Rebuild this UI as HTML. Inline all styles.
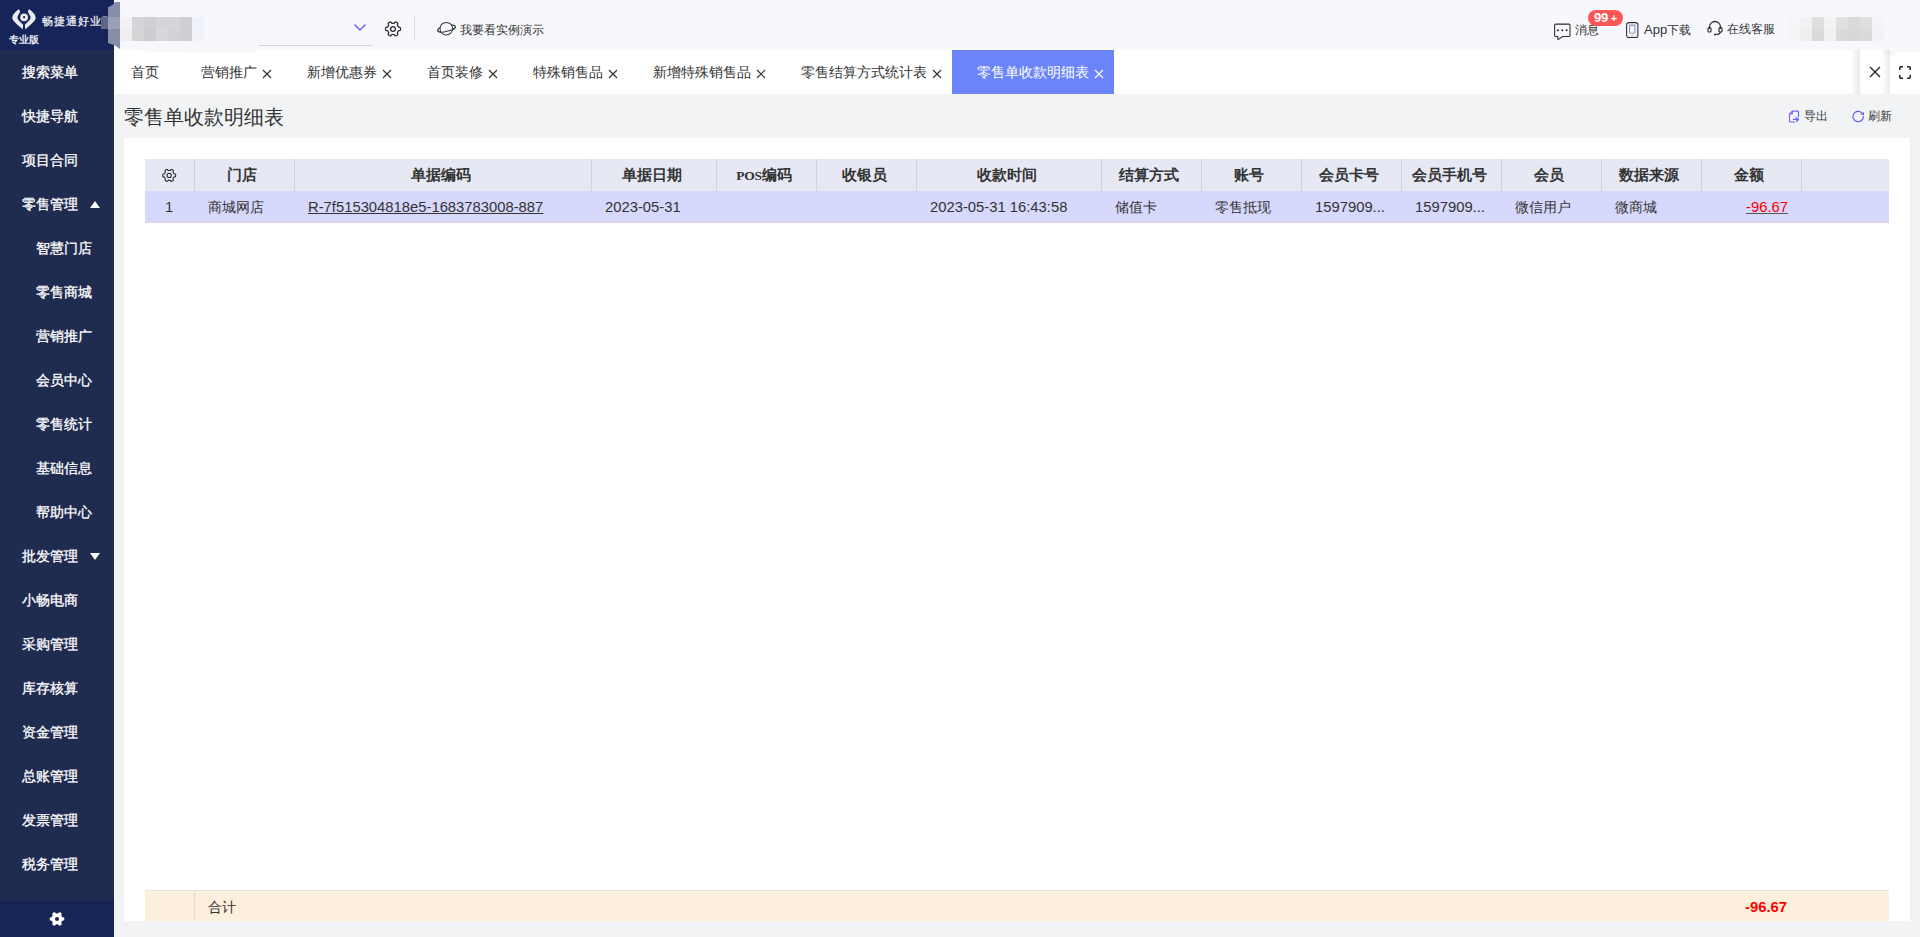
<!DOCTYPE html>
<html><head><meta charset="utf-8"><style>
*{box-sizing:border-box;margin:0;padding:0}
html,body{width:1920px;height:937px;overflow:hidden;background:#f2f3f5;font-family:"Liberation Sans",sans-serif;}
.a{position:absolute;white-space:nowrap}
#side{position:absolute;left:0;top:0;width:114px;height:937px;background:#1f2b4f;}
.mi{position:absolute;left:22px;height:44px;line-height:44px;font-size:14px;-webkit-text-stroke:0.3px #fff;color:#fff;white-space:nowrap}
.mi.sub{left:36px}
.tab{position:absolute;top:50px;height:44px;line-height:44px;font-size:14px;color:#333;white-space:nowrap;padding-left:24px}
.th{position:absolute;top:159px;height:32px;line-height:32px;font-size:14px;font-weight:bold;color:#333;text-align:center;white-space:nowrap}
.td{position:absolute;top:191px;height:32px;line-height:32px;font-size:13px;color:#333;white-space:nowrap}
.vb{position:absolute;top:159px;width:1px;height:32px;background:#d3d5dc}
</style></head><body>
<div id="side">
<div class="a" style="left:0;top:0;width:114px;height:50px;background:#16245a"></div>
<svg class="a" style="left:12px;top:9px" width="24" height="21" viewBox="0 0 24 21">
<path d="M6.6 0.2 C3.5 2.6 0.4 5.6 0.3 8.8 C0.3 11.8 5.5 16.2 10.8 20.2 L11.1 15.7 C8.3 13.2 5.6 10.9 5.4 8.8 C5.3 6.8 7.3 5 7.9 3.2 C8.2 1.8 7.6 0.7 6.6 0.2 Z" fill="#ebebee"/>
<path d="M17.4 0.2 C20.5 2.6 23.6 5.6 23.7 8.8 C23.7 11.8 18.5 16.2 13.2 20.2 L12.9 15.7 C15.7 13.2 18.4 10.9 18.6 8.8 C18.7 6.8 16.7 5 16.1 3.2 C15.8 1.8 16.4 0.7 17.4 0.2 Z" fill="#ebebee"/>
<circle cx="12.1" cy="8.3" r="3.9" fill="#ebebee"/><circle cx="12.1" cy="8.2" r="1.1" fill="#16245a"/>
</svg>
<div class="a" style="left:42px;top:13px;font-size:10.5px;letter-spacing:0.95px;line-height:16px;color:#f0f0f4;-webkit-text-stroke:0.25px #f0f0f4">畅捷通好业财</div>
<div class="a" style="left:9px;top:33px;font-size:10px;line-height:14px;color:#fff;-webkit-text-stroke:0.25px #fff">专业版</div>
<div class="mi" style="top:50px">搜索菜单</div>
<div class="mi" style="top:94px">快捷导航</div>
<div class="mi" style="top:138px">项目合同</div>
<div class="mi" style="top:182px">零售管理</div>
<div class="mi sub" style="top:226px">智慧门店</div>
<div class="mi sub" style="top:270px">零售商城</div>
<div class="mi sub" style="top:314px">营销推广</div>
<div class="mi sub" style="top:358px">会员中心</div>
<div class="mi sub" style="top:402px">零售统计</div>
<div class="mi sub" style="top:446px">基础信息</div>
<div class="mi sub" style="top:490px">帮助中心</div>
<div class="mi" style="top:534px">批发管理</div>
<div class="mi" style="top:578px">小畅电商</div>
<div class="mi" style="top:622px">采购管理</div>
<div class="mi" style="top:666px">库存核算</div>
<div class="mi" style="top:710px">资金管理</div>
<div class="mi" style="top:754px">总账管理</div>
<div class="mi" style="top:798px">发票管理</div>
<div class="mi" style="top:842px">税务管理</div>
<svg class="a" style="left:89px;top:200px" width="12" height="9"><path d="M6 1 L11 8 L1 8 Z" fill="#fff"/></svg>
<svg class="a" style="left:89px;top:552px" width="12" height="9"><path d="M1 1 L11 1 L6 8 Z" fill="#fff"/></svg>
<div class="a" style="left:0;top:901px;width:114px;height:36px;background:#162456"></div>
<svg class="a" style="left:47px;top:909px" width="20" height="20" viewBox="0 0 20 20"><path fill-rule="evenodd" fill="#fff" d="M17.35 9.90 L17.34 10.22 L17.30 10.54 L17.23 10.85 L17.07 11.15 L16.74 11.39 L16.18 11.56 L15.63 11.67 L15.28 11.82 L15.09 12.01 L14.96 12.21 L14.84 12.42 L14.72 12.62 L14.60 12.83 L14.48 13.04 L14.37 13.25 L14.31 13.51 L14.35 13.89 L14.53 14.43 L14.66 14.99 L14.61 15.40 L14.44 15.68 L14.21 15.91 L13.95 16.10 L13.68 16.27 L13.39 16.42 L13.10 16.54 L12.79 16.64 L12.46 16.65 L12.08 16.48 L11.66 16.08 L11.28 15.66 L10.98 15.44 L10.72 15.36 L10.48 15.35 L10.24 15.35 L10.00 15.35 L9.76 15.35 L9.52 15.35 L9.28 15.36 L9.02 15.44 L8.72 15.66 L8.34 16.08 L7.92 16.48 L7.54 16.65 L7.21 16.64 L6.90 16.54 L6.61 16.42 L6.33 16.27 L6.05 16.10 L5.79 15.91 L5.56 15.68 L5.39 15.40 L5.34 14.99 L5.47 14.43 L5.65 13.89 L5.69 13.51 L5.63 13.25 L5.52 13.04 L5.40 12.83 L5.28 12.63 L5.16 12.42 L5.04 12.21 L4.91 12.01 L4.72 11.82 L4.37 11.67 L3.82 11.56 L3.26 11.39 L2.93 11.15 L2.77 10.85 L2.70 10.54 L2.66 10.22 L2.65 9.90 L2.66 9.58 L2.70 9.26 L2.77 8.95 L2.93 8.65 L3.26 8.41 L3.82 8.24 L4.37 8.13 L4.72 7.98 L4.91 7.79 L5.04 7.59 L5.16 7.38 L5.28 7.17 L5.40 6.97 L5.52 6.76 L5.63 6.55 L5.69 6.29 L5.65 5.91 L5.47 5.37 L5.34 4.81 L5.39 4.40 L5.56 4.12 L5.79 3.89 L6.05 3.70 L6.32 3.53 L6.61 3.38 L6.90 3.26 L7.21 3.16 L7.54 3.15 L7.92 3.32 L8.34 3.72 L8.72 4.14 L9.02 4.36 L9.28 4.44 L9.52 4.45 L9.76 4.45 L10.00 4.45 L10.24 4.45 L10.48 4.45 L10.72 4.44 L10.98 4.36 L11.28 4.14 L11.66 3.72 L12.08 3.32 L12.46 3.15 L12.79 3.16 L13.10 3.26 L13.39 3.38 L13.67 3.53 L13.95 3.70 L14.21 3.89 L14.44 4.12 L14.61 4.40 L14.66 4.81 L14.53 5.37 L14.35 5.91 L14.31 6.29 L14.37 6.55 L14.48 6.76 L14.60 6.97 L14.72 7.18 L14.84 7.38 L14.96 7.59 L15.09 7.79 L15.28 7.98 L15.63 8.13 L16.18 8.24 L16.74 8.41 L17.07 8.65 L17.23 8.95 L17.30 9.26 L17.34 9.58 Z M12 9.9 A2 2 0 1 0 8 9.9 A2 2 0 1 0 12 9.9 Z"/></svg>
</div>
<div class="a" style="left:114px;top:0;width:1806px;height:50px;background:#f7f8fc"></div>
<div class="a" style="left:101px;top:17px;width:7px;height:12px;background:#5e6787"></div>
<div class="a" style="left:108px;top:2px;width:12px;height:47px;background:#878ea8;clip-path:polygon(40% 6%,60% 0,100% 0,100% 100%,55% 92%,0 87%,0 11%)"></div>
<div class="a" style="left:108px;top:17px;width:12px;height:12px;background:#9aa0b5"></div>
<div class="a" style="left:120px;top:17px;width:12px;height:12px;background:#f3f3f5"></div>
<div class="a" style="left:120px;top:29px;width:12px;height:12px;background:#efeff2"></div>
<div class="a" style="left:132px;top:17px;width:12px;height:12px;background:#d6d6da"></div>
<div class="a" style="left:132px;top:29px;width:12px;height:12px;background:#d6d6d9"></div>
<div class="a" style="left:144px;top:17px;width:12px;height:12px;background:#d0d0d4"></div>
<div class="a" style="left:144px;top:29px;width:12px;height:12px;background:#cdcdd1"></div>
<div class="a" style="left:156px;top:17px;width:12px;height:12px;background:#d6d6d9"></div>
<div class="a" style="left:156px;top:29px;width:12px;height:12px;background:#d8d8da"></div>
<div class="a" style="left:168px;top:17px;width:12px;height:12px;background:#d6d5d9"></div>
<div class="a" style="left:168px;top:29px;width:12px;height:12px;background:#d4d2d6"></div>
<div class="a" style="left:180px;top:17px;width:12px;height:12px;background:#cfcfd2"></div>
<div class="a" style="left:180px;top:29px;width:12px;height:12px;background:#cfcfd2"></div>
<div class="a" style="left:192px;top:17px;width:12px;height:12px;background:#eef2fd"></div>
<div class="a" style="left:192px;top:29px;width:12px;height:12px;background:#f1f3f8"></div>
<div class="a" style="left:259px;top:45px;width:113px;height:1px;background:#d3d4d8"></div>
<svg class="a" style="left:353px;top:23px" width="14" height="9"><path d="M1.5 1.5 L7 7 L12.5 1.5" fill="none" stroke="#5b5ef2" stroke-width="1.4"/></svg>
<svg class="a" style="left:383px;top:19px" width="20" height="20" viewBox="0 0 20 20"><path d="M17.50 9.90 L17.49 10.23 L17.47 10.55 L17.41 10.88 L17.30 11.19 L17.00 11.45 L16.33 11.60 L15.65 11.68 L15.34 11.84 L15.19 12.05 L15.08 12.27 L14.97 12.49 L14.85 12.70 L14.72 12.91 L14.59 13.12 L14.46 13.32 L14.36 13.55 L14.37 13.91 L14.63 14.53 L14.84 15.19 L14.77 15.58 L14.55 15.83 L14.30 16.04 L14.03 16.22 L13.75 16.40 L13.46 16.55 L13.17 16.69 L12.86 16.81 L12.54 16.87 L12.16 16.74 L11.70 16.23 L11.28 15.69 L10.99 15.50 L10.73 15.47 L10.49 15.48 L10.24 15.50 L10.00 15.50 L9.76 15.50 L9.51 15.48 L9.27 15.47 L9.01 15.50 L8.72 15.69 L8.30 16.23 L7.84 16.74 L7.46 16.87 L7.14 16.81 L6.83 16.69 L6.54 16.55 L6.25 16.40 L5.97 16.22 L5.70 16.04 L5.45 15.83 L5.23 15.58 L5.16 15.19 L5.37 14.53 L5.63 13.91 L5.64 13.55 L5.54 13.32 L5.41 13.12 L5.28 12.91 L5.15 12.70 L5.03 12.49 L4.92 12.27 L4.81 12.05 L4.66 11.84 L4.35 11.68 L3.67 11.60 L3.00 11.45 L2.70 11.19 L2.59 10.88 L2.53 10.55 L2.51 10.23 L2.50 9.90 L2.51 9.57 L2.53 9.25 L2.59 8.92 L2.70 8.61 L3.00 8.35 L3.67 8.20 L4.35 8.12 L4.66 7.96 L4.81 7.75 L4.92 7.53 L5.03 7.31 L5.15 7.10 L5.28 6.89 L5.41 6.68 L5.54 6.48 L5.64 6.25 L5.63 5.89 L5.37 5.27 L5.16 4.61 L5.23 4.22 L5.45 3.97 L5.70 3.76 L5.97 3.58 L6.25 3.40 L6.54 3.25 L6.83 3.11 L7.14 2.99 L7.46 2.93 L7.84 3.06 L8.30 3.57 L8.72 4.11 L9.01 4.30 L9.27 4.33 L9.51 4.32 L9.76 4.30 L10.00 4.30 L10.24 4.30 L10.49 4.32 L10.73 4.33 L10.99 4.30 L11.28 4.11 L11.70 3.57 L12.16 3.06 L12.54 2.93 L12.86 2.99 L13.17 3.11 L13.46 3.25 L13.75 3.40 L14.03 3.58 L14.30 3.76 L14.55 3.97 L14.77 4.22 L14.84 4.61 L14.63 5.27 L14.37 5.89 L14.36 6.25 L14.46 6.48 L14.59 6.68 L14.72 6.89 L14.85 7.10 L14.97 7.31 L15.08 7.53 L15.19 7.75 L15.34 7.96 L15.65 8.12 L16.33 8.20 L17.00 8.35 L17.30 8.61 L17.41 8.92 L17.47 9.25 L17.49 9.57 Z" fill="none" stroke="#2a2a2a" stroke-width="1.25" stroke-linejoin="round"/><circle cx="10" cy="9.9" r="2.4" fill="none" stroke="#2a2a2a" stroke-width="1.25"/></svg>
<div class="a" style="left:414px;top:16px;width:1px;height:24px;background:#dcdde2"></div>
<svg class="a" style="left:436px;top:21px" width="21" height="16" viewBox="0 0 21 16"><ellipse cx="10.5" cy="7.6" rx="9.2" ry="2.9" transform="rotate(-13 10.5 7.6)" fill="none" stroke="#3a3a3a" stroke-width="1.05"/><circle cx="10.3" cy="7.7" r="6.3" fill="#f7f8fc" stroke="#3a3a3a" stroke-width="1.05"/><path d="M1.54 9.67 A9.2 2.9 -13 0 0 19.46 5.53" fill="none" stroke="#3a3a3a" stroke-width="1.05"/></svg>
<div class="a" style="left:460px;top:22px;font-size:12px;line-height:16px;color:#333">我要看实例演示</div>
<svg class="a" style="left:1554px;top:23px" width="17" height="18" viewBox="0 0 17 18"><path d="M1.8 1.1 H14.8 A1.2 1.2 0 0 1 16 2.3 V12.3 A1.2 1.2 0 0 1 14.8 13.5 H8.8 L4 16.6 L3.6 13.5 H1.8 A1.2 1.2 0 0 1 0.6 12.3 V2.3 A1.2 1.2 0 0 1 1.8 1.1 Z" fill="none" stroke="#2e2e2e" stroke-width="1.1" stroke-linejoin="round"/><circle cx="4" cy="7.3" r="1.05" fill="#333"/><circle cx="8.3" cy="7.3" r="1.05" fill="#333"/><circle cx="12.6" cy="7.3" r="1.05" fill="#333"/></svg>
<div class="a" style="left:1575px;top:22px;font-size:12px;line-height:16px;color:#333">消息</div>
<div class="a" style="left:1588px;top:10px;width:35px;height:16px;border-radius:8px;background:#fc5558;color:#fff;font-size:13px;font-weight:bold;line-height:16px;text-align:center;letter-spacing:-0.3px">99<span style="font-size:11px"> +</span></div>
<svg class="a" style="left:1626px;top:22px" width="13" height="16" viewBox="0 0 13 16"><rect x="0.6" y="0.6" width="11.3" height="15" rx="2.2" fill="none" stroke="#2b2b2b" stroke-width="1.05"/><rect x="2.3" y="1.7" width="7.8" height="1.1" fill="#cfcfd3"/><rect x="3.6" y="3.3" width="5.4" height="8" rx="0.6" fill="none" stroke="#6f6fcf" stroke-width="0.9"/><rect x="3.8" y="10.3" width="5" height="1.6" fill="#c8c8cc"/><rect x="5.7" y="11.8" width="1.2" height="1.6" fill="#c0c0c8"/><rect x="2.3" y="13.4" width="7.8" height="1" fill="#d8d8dc"/></svg>
<div class="a" style="left:1644px;top:22px;font-size:12px;line-height:16px;color:#333"><span style="font-size:13px">App</span>下载</div>
<svg class="a" style="left:1707px;top:20px" width="16" height="16" viewBox="0 0 16 16"><path d="M2.5 9 V7 A5.5 5.5 0 0 1 13.5 7 V9" fill="none" stroke="#333" stroke-width="1.3"/><rect x="1" y="7.5" width="3" height="4.5" rx="1" fill="none" stroke="#333" stroke-width="1.2"/><rect x="12" y="7.5" width="3" height="4.5" rx="1" fill="none" stroke="#333" stroke-width="1.2"/><path d="M13.5 12 C13 14 11 14.5 8.5 14.5" fill="none" stroke="#333" stroke-width="1.2"/><circle cx="8" cy="14.5" r="1" fill="#333"/></svg>
<div class="a" style="left:1727px;top:21px;font-size:12px;line-height:16px;color:#333">在线客服</div>
<div class="a" style="left:1800px;top:17px;width:12px;height:12px;background:#f2f2f3"></div>
<div class="a" style="left:1800px;top:29px;width:12px;height:12px;background:#efeff0"></div>
<div class="a" style="left:1812px;top:17px;width:12px;height:12px;background:#dedede"></div>
<div class="a" style="left:1812px;top:29px;width:12px;height:12px;background:#dadada"></div>
<div class="a" style="left:1824px;top:17px;width:12px;height:12px;background:#f3f3f4"></div>
<div class="a" style="left:1824px;top:29px;width:12px;height:12px;background:#f1f1f2"></div>
<div class="a" style="left:1836px;top:17px;width:12px;height:12px;background:#e0e0e1"></div>
<div class="a" style="left:1836px;top:29px;width:12px;height:12px;background:#dadadb"></div>
<div class="a" style="left:1848px;top:17px;width:12px;height:12px;background:#d9d9da"></div>
<div class="a" style="left:1848px;top:29px;width:12px;height:12px;background:#d8d7da"></div>
<div class="a" style="left:1860px;top:17px;width:12px;height:12px;background:#dfdfe1"></div>
<div class="a" style="left:1860px;top:29px;width:12px;height:12px;background:#dadadb"></div>
<div class="a" style="left:1872px;top:17px;width:12px;height:12px;background:#f3f3f8"></div>
<div class="a" style="left:1872px;top:29px;width:12px;height:12px;background:#f2f2f7"></div>
<div class="a" style="left:1788px;top:17px;width:12px;height:12px;background:#f5f6fa"></div>
<div class="a" style="left:1788px;top:29px;width:12px;height:12px;background:#f4f5f9"></div>
<div class="a" style="left:114px;top:50px;width:1806px;height:44px;background:#fff"></div>
<div class="a" style="left:131px;top:50px;height:44px;line-height:44px;font-size:14px;color:#333">首页</div>
<div class="a" style="left:201px;top:50px;height:44px;line-height:44px;font-size:14px;color:#333">营销推广</div>
<svg class="a" style="left:262px;top:69px" width="10" height="10" viewBox="0 0 10 10"><path d="M1 1 L9 9 M9 1 L1 9" stroke="#333" stroke-width="1.15"/></svg>
<div class="a" style="left:307px;top:50px;height:44px;line-height:44px;font-size:14px;color:#333">新增优惠券</div>
<svg class="a" style="left:382px;top:69px" width="10" height="10" viewBox="0 0 10 10"><path d="M1 1 L9 9 M9 1 L1 9" stroke="#333" stroke-width="1.15"/></svg>
<div class="a" style="left:427px;top:50px;height:44px;line-height:44px;font-size:14px;color:#333">首页装修</div>
<svg class="a" style="left:488px;top:69px" width="10" height="10" viewBox="0 0 10 10"><path d="M1 1 L9 9 M9 1 L1 9" stroke="#333" stroke-width="1.15"/></svg>
<div class="a" style="left:533px;top:50px;height:44px;line-height:44px;font-size:14px;color:#333">特殊销售品</div>
<svg class="a" style="left:608px;top:69px" width="10" height="10" viewBox="0 0 10 10"><path d="M1 1 L9 9 M9 1 L1 9" stroke="#333" stroke-width="1.15"/></svg>
<div class="a" style="left:653px;top:50px;height:44px;line-height:44px;font-size:14px;color:#333">新增特殊销售品</div>
<svg class="a" style="left:756px;top:69px" width="10" height="10" viewBox="0 0 10 10"><path d="M1 1 L9 9 M9 1 L1 9" stroke="#333" stroke-width="1.15"/></svg>
<div class="a" style="left:801px;top:50px;height:44px;line-height:44px;font-size:14px;color:#333">零售结算方式统计表</div>
<svg class="a" style="left:932px;top:69px" width="10" height="10" viewBox="0 0 10 10"><path d="M1 1 L9 9 M9 1 L1 9" stroke="#333" stroke-width="1.15"/></svg>
<div class="a" style="left:952px;top:50px;width:162px;height:44px;background:#6b84f9"></div>
<div class="a" style="left:977px;top:50px;height:44px;line-height:44px;font-size:14px;color:#fff">零售单收款明细表</div>
<svg class="a" style="left:1094px;top:69px" width="10" height="10" viewBox="0 0 10 10"><path d="M1 1 L9 9 M9 1 L1 9" stroke="#fff" stroke-width="1.15"/></svg>
<div class="a" style="left:140px;top:50px;width:117px;height:3px;background:#f6f7f9;clip-path:polygon(0 0,100% 0,100% 100%,45% 100%,0 30%)"></div>
<div class="a" style="left:1883px;top:50px;width:37px;height:6px;background:#f6f7f9;clip-path:polygon(0 0,100% 0,100% 30%,90% 40%,33% 40%,33% 100%,0 80%)"></div>
<div class="a" style="left:1851px;top:50px;width:9px;height:44px;background:linear-gradient(to right,rgba(0,0,0,0),rgba(0,0,0,0.09))"></div>
<div class="a" style="left:1882px;top:50px;width:8px;height:44px;background:linear-gradient(to right,rgba(0,0,0,0),rgba(0,0,0,0.08))"></div>
<svg class="a" style="left:1869px;top:66px" width="12" height="12" viewBox="0 0 12 12"><path d="M1 1 L11 11 M11 1 L1 11" stroke="#222" stroke-width="1.3"/></svg>
<svg class="a" style="left:1899px;top:66px" width="12" height="13" viewBox="0 0 12 13"><path d="M0.8 4 V1.8 Q0.8 0.8 1.8 0.8 H4 M8 0.8 H10.2 Q11.2 0.8 11.2 1.8 V4 M11.2 9 V11.2 Q11.2 12.2 10.2 12.2 H8 M4 12.2 H1.8 Q0.8 12.2 0.8 11.2 V9" fill="none" stroke="#222" stroke-width="1.5"/></svg>
<div class="a" style="left:124px;top:104px;font-size:20px;line-height:26px;color:#333">零售单收款明细表</div>
<svg class="a" style="left:1786px;top:108px" width="16" height="17" viewBox="0 0 16 17"><defs><linearGradient id="eg" x1="0" y1="0" x2="1" y2="0.3"><stop offset="0" stop-color="#9a5cf6"/><stop offset="1" stop-color="#5563f7"/></linearGradient></defs><path d="M8.7 14 H4.6 Q3.5 14 3.5 12.9 V5.9 L6.3 3.1 H11.4 Q12.5 3.1 12.5 4.2 V8.6 M6.3 3.1 V5.8 H3.6 M7.3 11.4 H12.5 M10.4 9.3 L12.6 11.4 L10.4 13.5" fill="none" stroke="url(#eg)" stroke-width="1.15" stroke-linecap="round" stroke-linejoin="round"/></svg>
<div class="a" style="left:1804px;top:108px;font-size:12px;line-height:16px;color:#333">导出</div>
<svg class="a" style="left:1849px;top:108px" width="18" height="17" viewBox="0 0 18 17"><path d="M14.4 8.3 A5.2 5.2 0 1 1 12.7 4.7" fill="none" stroke="#5e5bf7" stroke-width="1.15" stroke-linecap="round"/><path d="M11.2 6.6 L14.9 3.9 L14.9 6.9 Z" fill="#5258f7"/></svg>
<div class="a" style="left:1868px;top:108px;font-size:12px;line-height:16px;color:#333">刷新</div>
<div class="a" style="left:124px;top:138px;width:1786px;height:783px;background:#fff"></div>
<div class="a" style="left:145px;top:159px;width:1744px;height:32px;background:#e6e9f4"></div>
<div class="a" style="left:145px;top:191px;width:1744px;height:31px;background:#d6d8fc"></div>
<div class="a" style="left:145px;top:222px;width:1744px;height:1px;background:#d8d8dc"></div>
<div class="a" style="left:194px;top:159px;width:1px;height:32px;background:#d0d2d8"></div>
<div class="a" style="left:294px;top:159px;width:1px;height:32px;background:#d0d2d8"></div>
<div class="a" style="left:591px;top:159px;width:1px;height:32px;background:#d0d2d8"></div>
<div class="a" style="left:716px;top:159px;width:1px;height:32px;background:#d0d2d8"></div>
<div class="a" style="left:816px;top:159px;width:1px;height:32px;background:#d0d2d8"></div>
<div class="a" style="left:916px;top:159px;width:1px;height:32px;background:#d0d2d8"></div>
<div class="a" style="left:1101px;top:159px;width:1px;height:32px;background:#d0d2d8"></div>
<div class="a" style="left:1201px;top:159px;width:1px;height:32px;background:#d0d2d8"></div>
<div class="a" style="left:1301px;top:159px;width:1px;height:32px;background:#d0d2d8"></div>
<div class="a" style="left:1401px;top:159px;width:1px;height:32px;background:#d0d2d8"></div>
<div class="a" style="left:1501px;top:159px;width:1px;height:32px;background:#d0d2d8"></div>
<div class="a" style="left:1601px;top:159px;width:1px;height:32px;background:#d0d2d8"></div>
<div class="a" style="left:1701px;top:159px;width:1px;height:32px;background:#d0d2d8"></div>
<div class="a" style="left:1801px;top:159px;width:1px;height:32px;background:#d0d2d8"></div>
<div class="a" style="left:192px;top:159px;width:100px;height:32px;line-height:32px;text-align:center;font-size:14.6px;font-weight:bold;color:#333">门店</div>
<div class="a" style="left:292px;top:159px;width:297px;height:32px;line-height:32px;text-align:center;font-size:14.6px;font-weight:bold;color:#333">单据编码</div>
<div class="a" style="left:589px;top:159px;width:125px;height:32px;line-height:32px;text-align:center;font-size:14.6px;font-weight:bold;color:#333">单据日期</div>
<div class="a" style="left:714px;top:159px;width:100px;height:32px;line-height:32px;text-align:center;font-size:14.6px;font-weight:bold;color:#333"><span style="font-family:'Liberation Serif',serif;font-size:13.5px;letter-spacing:-0.3px">POS</span>编码</div>
<div class="a" style="left:814px;top:159px;width:100px;height:32px;line-height:32px;text-align:center;font-size:14.6px;font-weight:bold;color:#333">收银员</div>
<div class="a" style="left:914px;top:159px;width:185px;height:32px;line-height:32px;text-align:center;font-size:14.6px;font-weight:bold;color:#333">收款时间</div>
<div class="a" style="left:1099px;top:159px;width:100px;height:32px;line-height:32px;text-align:center;font-size:14.6px;font-weight:bold;color:#333">结算方式</div>
<div class="a" style="left:1199px;top:159px;width:100px;height:32px;line-height:32px;text-align:center;font-size:14.6px;font-weight:bold;color:#333">账号</div>
<div class="a" style="left:1299px;top:159px;width:100px;height:32px;line-height:32px;text-align:center;font-size:14.6px;font-weight:bold;color:#333">会员卡号</div>
<div class="a" style="left:1399px;top:159px;width:100px;height:32px;line-height:32px;text-align:center;font-size:14.6px;font-weight:bold;color:#333">会员手机号</div>
<div class="a" style="left:1499px;top:159px;width:100px;height:32px;line-height:32px;text-align:center;font-size:14.6px;font-weight:bold;color:#333">会员</div>
<div class="a" style="left:1599px;top:159px;width:100px;height:32px;line-height:32px;text-align:center;font-size:14.6px;font-weight:bold;color:#333">数据来源</div>
<div class="a" style="left:1699px;top:159px;width:100px;height:32px;line-height:32px;text-align:center;font-size:14.6px;font-weight:bold;color:#333">金额</div>
<svg class="a" style="left:159px;top:165px" width="20" height="20" viewBox="0 0 20 20"><path d="M16.65 10.40 L16.64 10.68 L16.62 10.96 L16.58 11.24 L16.49 11.51 L16.24 11.74 L15.71 11.88 L15.17 11.97 L14.92 12.12 L14.79 12.30 L14.69 12.49 L14.59 12.69 L14.49 12.88 L14.38 13.06 L14.26 13.24 L14.14 13.42 L14.04 13.63 L14.04 13.92 L14.23 14.43 L14.38 14.96 L14.30 15.29 L14.12 15.50 L13.90 15.68 L13.67 15.84 L13.43 15.99 L13.18 16.12 L12.92 16.24 L12.66 16.34 L12.38 16.40 L12.06 16.30 L11.68 15.91 L11.33 15.49 L11.07 15.34 L10.85 15.33 L10.63 15.34 L10.42 15.35 L10.20 15.35 L9.98 15.35 L9.77 15.34 L9.55 15.33 L9.33 15.34 L9.07 15.49 L8.72 15.91 L8.34 16.30 L8.02 16.40 L7.74 16.34 L7.48 16.24 L7.22 16.12 L6.98 15.99 L6.73 15.84 L6.50 15.68 L6.28 15.50 L6.10 15.29 L6.02 14.96 L6.17 14.43 L6.36 13.92 L6.36 13.63 L6.26 13.42 L6.14 13.24 L6.02 13.06 L5.91 12.88 L5.81 12.69 L5.71 12.49 L5.61 12.30 L5.48 12.12 L5.23 11.97 L4.69 11.88 L4.16 11.74 L3.91 11.51 L3.82 11.24 L3.78 10.96 L3.76 10.68 L3.75 10.40 L3.76 10.12 L3.78 9.84 L3.82 9.56 L3.91 9.29 L4.16 9.06 L4.69 8.92 L5.23 8.83 L5.48 8.68 L5.61 8.50 L5.71 8.31 L5.81 8.11 L5.91 7.92 L6.02 7.74 L6.14 7.56 L6.26 7.38 L6.36 7.17 L6.36 6.88 L6.17 6.37 L6.02 5.84 L6.10 5.51 L6.28 5.30 L6.50 5.12 L6.73 4.96 L6.97 4.81 L7.22 4.68 L7.48 4.56 L7.74 4.46 L8.02 4.40 L8.34 4.50 L8.72 4.89 L9.07 5.31 L9.33 5.46 L9.55 5.47 L9.77 5.46 L9.98 5.45 L10.20 5.45 L10.42 5.45 L10.63 5.46 L10.85 5.47 L11.07 5.46 L11.33 5.31 L11.68 4.89 L12.06 4.50 L12.38 4.40 L12.66 4.46 L12.92 4.56 L13.18 4.68 L13.42 4.81 L13.67 4.96 L13.90 5.12 L14.12 5.30 L14.30 5.51 L14.38 5.84 L14.23 6.37 L14.04 6.88 L14.04 7.17 L14.14 7.38 L14.26 7.56 L14.38 7.74 L14.49 7.93 L14.59 8.11 L14.69 8.31 L14.79 8.50 L14.92 8.68 L15.17 8.83 L15.71 8.92 L16.24 9.06 L16.49 9.29 L16.58 9.56 L16.62 9.84 L16.64 10.12 Z" fill="none" stroke="#2a2a2a" stroke-width="1.1" stroke-linejoin="round"/><circle cx="10.2" cy="10.4" r="2.1" fill="none" stroke="#2a2a2a" stroke-width="1.1"/></svg>
<div class="a" style="left:165px;top:191px;height:32px;line-height:32px;font-size:14.8px;color:#333;">1</div>
<div class="a" style="left:208px;top:191px;height:32px;line-height:32px;font-size:14px;color:#333;">商城网店</div>
<div class="a" style="left:308px;top:191px;height:32px;line-height:32px;font-size:14.8px;color:#333;text-decoration:underline">R-7f515304818e5-1683783008-887</div>
<div class="a" style="left:605px;top:191px;height:32px;line-height:32px;font-size:14.8px;color:#333;">2023-05-31</div>
<div class="a" style="left:930px;top:191px;height:32px;line-height:32px;font-size:14.8px;color:#333;">2023-05-31 16:43:58</div>
<div class="a" style="left:1115px;top:191px;height:32px;line-height:32px;font-size:14px;color:#333;">储值卡</div>
<div class="a" style="left:1215px;top:191px;height:32px;line-height:32px;font-size:14px;color:#333;">零售抵现</div>
<div class="a" style="left:1315px;top:191px;height:32px;line-height:32px;font-size:14.8px;color:#333;">1597909...</div>
<div class="a" style="left:1415px;top:191px;height:32px;line-height:32px;font-size:14.8px;color:#333;">1597909...</div>
<div class="a" style="left:1515px;top:191px;height:32px;line-height:32px;font-size:14px;color:#333;">微信用户</div>
<div class="a" style="left:1615px;top:191px;height:32px;line-height:32px;font-size:14px;color:#333;">微商城</div>
<div class="a" style="left:1746px;top:191px;height:32px;line-height:32px;font-size:14.8px;color:#333;text-decoration:underline;text-decoration-color:#555;color:#f00">-96.67</div>
<div class="a" style="left:145px;top:890px;width:1744px;height:1px;background:#e2e2e2"></div>
<div class="a" style="left:145px;top:891px;width:1744px;height:30px;background:#fcf0dc"></div>
<div class="a" style="left:194px;top:891px;width:1px;height:30px;background:#e6dccb"></div>
<div class="a" style="left:208px;top:891px;height:32px;line-height:32px;font-size:14px;color:#333">合计</div>
<div class="a" style="left:1745px;top:891px;height:32px;line-height:32px;font-size:14.8px;font-weight:bold;color:#f00">-96.67</div>
</body></html>
